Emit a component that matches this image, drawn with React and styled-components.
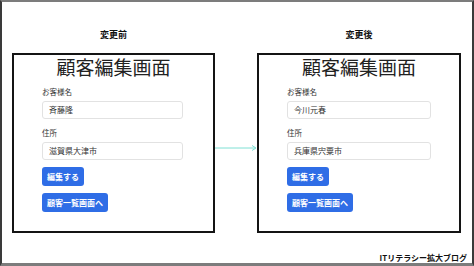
import styled, { createGlobalStyle } from 'styled-components';

const GlobalStyle = createGlobalStyle`
  body {
    margin: 0;
    background: #fff;
    font-family: "Noto Sans CJK JP", "Noto Sans", sans-serif;
  }
`;

const Frame = styled.div`
  width: 474px;
  height: 266px;
  box-sizing: border-box;
  border-top: 2px solid #7c7c7c;
  border-bottom: 3px solid #7c7c7c;
  border-left: 2px solid #3a3a3a;
  border-right: 2px solid #3a3a3a;
  background: #fff;
  display: flex;
  flex-direction: column;
`;

const Row = styled.div`
  display: flex;
  align-items: flex-start;
  padding-left: 10px;
`;

const Column = styled.div`
  width: ${(p) => p.$width}px;
  display: flex;
  flex-direction: column;
`;

const Heading = styled.div`
  height: 12px;
  line-height: 12px;
  margin: 27px 0 12px;
  font-size: 9px;
  font-weight: 700;
  color: #111;
  text-align: center;
`;

const Card = styled.div`
  height: 180px;
  box-sizing: border-box;
  border: 2px solid #141414;
  padding: 1px 0 0 28px;
  display: flex;
  flex-direction: column;
  align-items: flex-start;
`;

const Title = styled.div`
  align-self: stretch;
  margin-left: -28px;
  font-size: 19px;
  line-height: 22px;
  color: #222;
  text-align: center;
`;

const Label = styled.div`
  margin-top: 8px;
  font-size: 7.5px;
  line-height: 11px;
  color: #333;
`;

const Input = styled.div`
  margin-top: 4px;
  width: ${(p) => p.$width}px;
  height: 18px;
  box-sizing: border-box;
  border: 1px solid #e2e2e2;
  border-radius: 3px;
  padding-left: 6px;
  font-size: 8px;
  line-height: 16px;
  color: #333;
`;

const Button = styled.div`
  margin-top: 7px;
  height: 19px;
  box-sizing: border-box;
  padding: 0 5px;
  background: #2f6de6;
  border-radius: 3px;
  font-size: 8px;
  font-weight: 700;
  line-height: 19px;
  color: #fff;
`;

const Connector = styled.div`
  width: 42px;
  height: 8px;
  margin-top: 131px;
`;

const Footer = styled.div`
  margin-top: 20px;
  padding-right: 5px;
  text-align: right;
  font-size: 8px;
  line-height: 10px;
  font-weight: 700;
  color: #111;
`;

function EditCard({ heading, name, address, width, inputWidth }) {
  return (
    <Column $width={width}>
      <Heading>{heading}</Heading>
      <Card>
        <Title>顧客編集画面</Title>
        <Label>お客様名</Label>
        <Input $width={inputWidth}>{name}</Input>
        <Label>住所</Label>
        <Input $width={inputWidth}>{address}</Input>
        <Button>編集する</Button>
        <Button>顧客一覧画面へ</Button>
      </Card>
    </Column>
  );
}

export default function App() {
  return (
    <>
      <GlobalStyle />
      <Frame>
        <Row>
          <EditCard heading="変更前" name="斉藤隆" address="滋賀県大津市" width={203} inputWidth={141} />
          <Connector>
            <svg width="42" height="8" viewBox="0 0 42 8">
              <line x1="0" y1="4" x2="40" y2="4" stroke="#7fe0d4" strokeWidth="1" />
              <path d="M37 1.5 L41 4 L37 6.5" fill="none" stroke="#7fe0d4" strokeWidth="1" />
            </svg>
          </Connector>
          <EditCard heading="変更後" name="今川元春" address="兵庫県宍粟市" width={204} inputWidth={144} />
        </Row>
        <Footer>ITリテラシー拡大ブログ</Footer>
      </Frame>
    </>
  );
}
